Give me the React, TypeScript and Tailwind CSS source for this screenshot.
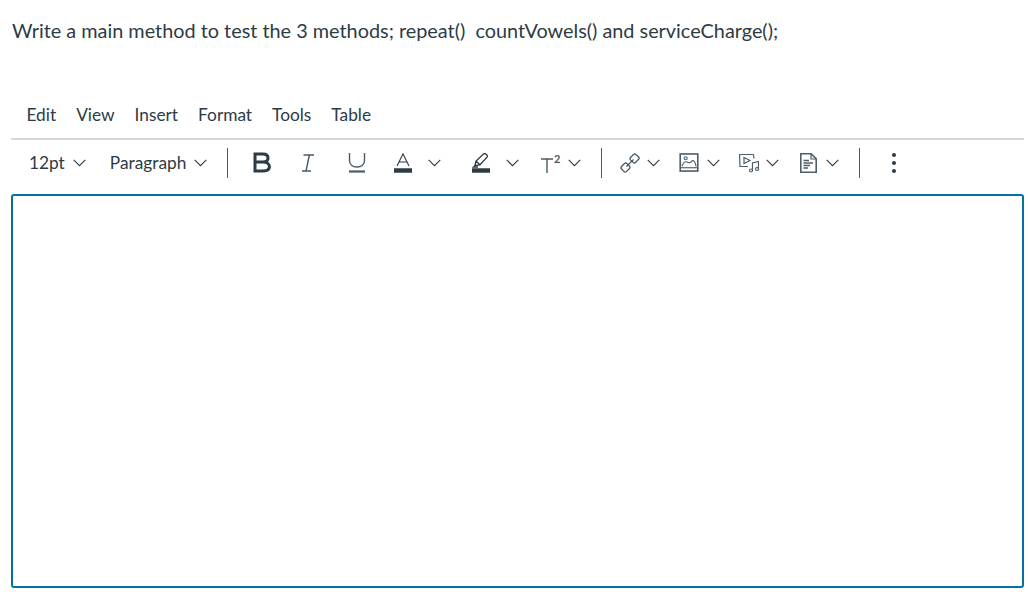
const Chev = ({ className = "" }: { className?: string }) => (
  <svg viewBox="0 0 13 8" className={`w-[13px] h-[8px] shrink-0 -translate-x-px ${className}`} fill="none" stroke="#2d3b45" strokeWidth="1.1">
    <path d="M0.7 0.8 L6.5 6.6 L12.3 0.8" />
  </svg>
);
const Divider = ({ className = "" }: { className?: string }) => (
  <div className={`w-px h-[30px] bg-[#4a5a66] shrink-0 ${className}`} />
);

export default function App() {
  return (
    <div className="w-[1028px] h-[592px] bg-white overflow-hidden text-[#2d3b45] font-['Lato',sans-serif]">
      <p className="pl-3 pt-[16px] h-[84px] text-[19.85px] leading-[28px] whitespace-pre">
        Write a main method to test the 3 methods; repeat()  countVowels() and serviceCharge();
      </p>
      <div className="ml-[11px] mr-1">
        <div className="h-[54px] flex items-center pl-[15.5px] gap-[20px] text-[17.3px] pt-[7px]">
          <span>Edit</span>
          <span>View</span>
          <span>Insert</span>
          <span>Format</span>
          <span>Tools</span>
          <span>Table</span>
        </div>
        <div className="h-[2px] bg-[#d4d6d7]" />
        <div className="h-[45px] flex items-center text-[17.3px] relative">
          <span className="ml-[18px]">12pt</span>
          <Chev className="ml-[9px]" />
          <span className="ml-[23px]">Paragraph</span>
          <Chev className="ml-[9px]" />
          <Divider className="ml-[19px]" />
          <svg viewBox="0 0 18 21" className="w-[18px] h-[21px] ml-[25px] shrink-0" fill="none" stroke="#2d3b45" strokeWidth="3">
            <path d="M2 2 H10 C13.5 2 15 4 15 6 C15 8.5 13 10 10 10 H2 Z M10 10 C14 10 16.4 12 16.4 14.6 C16.4 17.4 14 19 10.5 19 H2 V2" />
          </svg>
          <svg viewBox="0 0 14 18" className="w-[14px] h-[18px] ml-[30px] shrink-0" fill="none" stroke="#4a5a66" strokeWidth="1.4">
            <path d="M2.5 1 H13 M1 17 H10 M8.4 1 L5 17" />
          </svg>
          <svg viewBox="0 0 18 20" className="w-[18px] h-[20px] ml-[33px] shrink-0" fill="none" stroke="#4a5a66">
            <path d="M1.5 0 V7.5 C1.5 11.5 4.5 14 9 14 C13.5 14 16.5 11.5 16.5 7.5 V0" strokeWidth="1.4" />
            <path d="M1 18.5 H17" strokeWidth="2.2" />
          </svg>
          <svg viewBox="0 0 18 20" className="w-[18px] h-[20px] ml-[28px] shrink-0" fill="none" stroke="#2d3b45">
            <path d="M3 13 L9 0.8 L15 13 M5 9 H13" strokeWidth="1.1" />
            <path d="M0 17.5 H18" strokeWidth="4.5" />
          </svg>
          <Chev className="ml-[17px]" />
          <svg viewBox="0 0 18 20" className="w-[18px] h-[20px] ml-[30px] shrink-0" fill="none" stroke="#2d3b45">
            <path d="M3 12.5 L4 8 L11.5 1 C12.5 0.2 13.5 0.5 14.5 1.5 C15.5 2.5 15.5 3.5 15 4.2 L8 11.8 Z M4 8 L8 11.8 M3 12.5 L1.5 14 H6" strokeWidth="1.3" />
            <path d="M0 17.5 H18" strokeWidth="4.5" />
          </svg>
          <Chev className="ml-[17px]" />
          <svg viewBox="0 0 20 20" className="w-[20px] h-[20px] ml-[21px] shrink-0" fill="none" stroke="#4a5a66">
            <path d="M0 6 H12 M6 6 V20" strokeWidth="1.4" />
            <text x="13" y="10" fontSize="11" fontWeight="700" fill="#4a5a66" stroke="none" fontFamily="Lato, sans-serif">2</text>
          </svg>
          <Chev className="ml-[8px]" />
          <Divider className="ml-[19px]" />
          <svg viewBox="0 0 20 20" className="w-[20px] h-[20px] ml-[18px] shrink-0" fill="none" stroke="#4a5a66" strokeWidth="1.3">
            <path d="M10.5 4.5 L13.5 1.5 C14.3 0.8 15 0.8 15.8 1.4 L18.6 4 C19.3 4.8 19.3 5.6 18.6 6.3 L15.5 9.5 C14.8 10.2 14 10.2 13.3 9.6 L10.6 7 C9.9 6.2 9.9 5.2 10.5 4.5 Z" />
            <path d="M4.5 10.5 L1.5 13.5 C0.8 14.3 0.8 15 1.4 15.8 L4 18.6 C4.8 19.3 5.6 19.3 6.3 18.6 L9.5 15.5 C10.2 14.8 10.2 14 9.6 13.3 L7 10.6 C6.2 9.9 5.2 9.9 4.5 10.5 Z" />
            <path d="M6.5 13.5 L13.5 6.5" />
          </svg>
          <Chev className="ml-[8px]" />
          <svg viewBox="0 0 20 20" className="w-[20px] h-[19px] ml-[18px] shrink-0" fill="none" stroke="#4f5e69">
            <rect x="0.75" y="1" width="18.5" height="18" strokeWidth="1.7" />
            <path d="M1 15.5 H19" strokeWidth="1.2" />
            <circle cx="6.5" cy="5.5" r="1.6" strokeWidth="1.2" />
            <path d="M2.5 14 C4 10 6 8.5 8 9.5 C10 10.5 11 11 13 8.5 C14.5 7 16.5 9 17.5 14" strokeWidth="1.2" />
          </svg>
          <Chev className="ml-[9px]" />
          <svg viewBox="0 0 20 20" className="w-[20px] h-[20px] ml-[18px] shrink-0" fill="none" stroke="#4f5e69" strokeWidth="1.2">
            <path d="M9 13.5 H1 L0.5 1.5 H14 L14.5 2 L15 5.5" />
            <path d="M5 4.5 L11 7.5 L5 10.5 Z" />
            <circle cx="12" cy="17.5" r="1.5" />
            <circle cx="18" cy="16" r="1.5" />
            <path d="M13.5 17.5 V10 L19.5 8.5 V16" />
          </svg>
          <Chev className="ml-[8px]" />
          <svg viewBox="0 0 17 20" className="w-[17px] h-[20px] ml-[20px] shrink-0" fill="none" stroke="#4f5e69">
            <path d="M0.75 0.75 H11 L16.25 6 V19.25 H0.75 Z" strokeWidth="1.7" />
            <path d="M11 1 V6 H16" strokeWidth="1.2" />
            <path d="M3.5 7.5 H9 M3.5 10 H13 M3.5 12.5 H10 M3.5 15 H8" strokeWidth="1.4" />
          </svg>
          <Chev className="ml-[10px]" />
          <Divider className="ml-[19px]" />
          <div className="ml-[32px] flex flex-col gap-[4px]">
            <span className="w-[4px] h-[4px] rounded-full bg-[#2d3b45]" />
            <span className="w-[4px] h-[4px] rounded-full bg-[#2d3b45]" />
            <span className="w-[4px] h-[4px] rounded-full bg-[#2d3b45]" />
          </div>
        </div>
        <div className="mt-[9px] h-[394px] border-2 border-[#0770a3] rounded-[3px]" />
      </div>
    </div>
  );
}
